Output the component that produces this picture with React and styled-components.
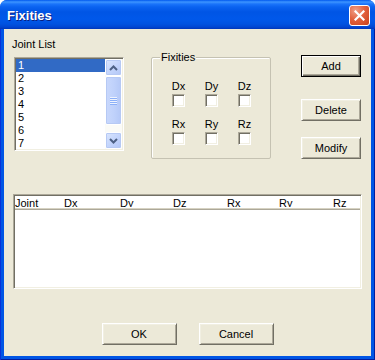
import React from "react";
import styled, { createGlobalStyle } from "styled-components";

const GlobalStyle = createGlobalStyle`
  html, body { margin: 0; padding: 0; background: #ffffff; }
  body { font-family: "Liberation Sans", Arial, sans-serif; font-size: 11px; color: #000; }
  * { box-sizing: border-box; }
`;

const Window = styled.div`
  width: 375px;
  height: 360px;
  display: flex;
  flex-direction: column;
  border-radius: 7px 7px 0 0;
  overflow: hidden;
  background: #0054e3;
`;

const TitleBar = styled.div`
  height: 29px;
  flex: none;
  display: flex;
  align-items: center;
  justify-content: space-between;
  padding: 0 5px 0 7px;
  background: linear-gradient(
    180deg,
    #0058ee 0px,
    #3d95ff 2px,
    #1a74fa 4px,
    #0a62f0 7px,
    #0055e5 12px,
    #0058ea 19px,
    #0052e0 24px,
    #0046d2 27px,
    #0035b8 29px
  );
`;

const Title = styled.span`
  font-family: "Liberation Sans", Arial, sans-serif;
  font-weight: bold;
  font-size: 13px;
  color: #ffffff;
  text-shadow: 1px 1px 0 #0a1e80;
  margin-top: 1px;
`;

const CloseButton = styled.div`
  width: 21px;
  height: 21px;
  margin-top: 1px;
  border: 1px solid #ffffff;
  border-radius: 3px;
  background: radial-gradient(circle at 30% 25%, #f0a088 0%, #e2623f 45%, #c8401a 100%);
  display: flex;
  align-items: center;
  justify-content: center;
`;

const Frame = styled.div`
  flex: 1;
  display: flex;
  padding: 0 4px 4px 4px;
  background: #0055e5;
  box-shadow: inset 1px 0 0 #0831d9, inset -1px 0 0 #001ea0, inset 0 -1px 0 #001ea0;
`;

const Client = styled.div`
  flex: 1;
  background: #ece9d8;
  display: flex;
  flex-direction: column;
`;

const TopRow = styled.div`
  height: 130px;
  flex: none;
  display: flex;
  align-items: flex-start;
  padding-left: 8px;
`;

const JointColumn = styled.div`
  display: flex;
  flex-direction: column;
  margin-top: 9px;
`;

const Label = styled.div`
  line-height: 13px;
  height: 13px;
  font-size: 11px;
`;

const sunken = `
  border-top: 1px solid #aca899;
  border-left: 1px solid #aca899;
  border-right: 1px solid #ffffff;
  border-bottom: 1px solid #ffffff;
  box-shadow: inset 1px 1px 0 #716f64, inset -1px -1px 0 #f1efe2;
`;

const ListBox = styled.div`
  ${sunken}
  margin: 6px 0 0 2px;
  width: 110px;
  height: 94px;
  padding: 1px;
  background: #ffffff;
  display: flex;
`;

const Items = styled.div`
  flex: 1;
  overflow: hidden;
`;

const Item = styled.div`
  height: 13px;
  line-height: 13px;
  padding-left: 2px;
  background: ${(p) => (p.$selected ? "#316ac5" : "transparent")};
  color: ${(p) => (p.$selected ? "#ffffff" : "#000000")};
`;

const ScrollBar = styled.div`
  width: 17px;
  flex: none;
  display: flex;
  flex-direction: column;
  background: #fbfbf7;
`;

const ScrollButton = styled.div`
  width: 17px;
  height: 17px;
  flex: none;
  border: 1px solid #ffffff;
  border-radius: 2px;
  box-shadow: inset 0 0 0 1px #b6c9f4;
  background: linear-gradient(135deg, #dae6fd 0%, #c4d5fc 50%, #b2c6f6 100%);
  display: flex;
  align-items: center;
  justify-content: center;
`;

const Thumb = styled.div`
  height: 49px;
  margin-bottom: 7px;
  border: 1px solid #ffffff;
  border-radius: 2px;
  box-shadow: inset 0 0 0 1px #b6c9f4;
  background: linear-gradient(90deg, #c9d8fc 0%, #c0d2fb 50%, #b4c8f7 100%);
  display: flex;
  flex-direction: column;
  align-items: center;
  justify-content: center;
  gap: 1px;
`;

const Grip = styled.div`
  width: 7px;
  height: 1px;
  background: #eef3fe;
  box-shadow: 0 1px 0 #8cb0f8;
`;

const Track = styled.div`
  flex: 1;
`;

const GroupBox = styled.div`
  position: relative;
  margin: 28px 0 0 27px;
  width: 120px;
  height: 102px;
  border: 1px solid #c5c2b2;
  border-radius: 2px;
  box-shadow: inset 1px 1px 0 #ffffff;
  padding: 22px 0 0 10px;
`;

const Legend = styled.span`
  position: absolute;
  top: -7px;
  left: 8px;
  padding: 0 1px;
  line-height: 13px;
  background: #ece9d8;
`;

const CheckGrid = styled.div`
  display: grid;
  grid-template-columns: repeat(3, 33px);
  row-gap: 11px;
`;

const CheckCell = styled.div`
  display: flex;
  flex-direction: column;
  align-items: center;
  gap: 1px;
`;

const CheckBox = styled.div`
  ${sunken}
  width: 13px;
  height: 13px;
  background: #ffffff;
`;

const ButtonColumn = styled.div`
  display: flex;
  flex-direction: column;
  margin: 26px 0 0 30px;
`;

const Button = styled.div`
  width: ${(p) => p.$w || 60}px;
  height: 22px;
  margin-top: ${(p) => p.$mt || 0}px;
  display: flex;
  align-items: center;
  justify-content: center;
  background: #ece9d8;
  line-height: 13px;
  border-top: 1px solid ${(p) => (p.$default ? "#000" : "#ffffff")};
  border-left: 1px solid ${(p) => (p.$default ? "#000" : "#ffffff")};
  border-right: 1px solid ${(p) => (p.$default ? "#000" : "#716f64")};
  border-bottom: 1px solid ${(p) => (p.$default ? "#000" : "#716f64")};
  box-shadow: ${(p) =>
    p.$default
      ? "inset 1px 1px 0 #ffffff, inset -1px -1px 0 #716f64, inset -2px -2px 0 #aca899"
      : "inset 1px 1px 0 #f1efe2, inset -1px -1px 0 #aca899"};
`;

const Table = styled.div`
  ${sunken}
  margin: 35px 0 0 9px;
  width: 349px;
  height: 95px;
  padding: 1px;
  background: #ffffff;
`;

const HeaderRow = styled.div`
  display: grid;
  grid-template-columns: 49px 56px 53px 54px 52px 54px 1fr;
  padding-bottom: 1px;
  border-bottom: 1px solid #d6d2c2;
  box-shadow: 0 1px 0 #aca899;
`;

const HeaderCell = styled.div`
  height: 11px;
  line-height: 14px;
  overflow: hidden;
  white-space: nowrap;
`;

const BottomRow = styled.div`
  display: flex;
  justify-content: center;
  gap: 22px;
  margin-top: 34px;
`;

const Arrow = ({ up }) => (
  <svg width="9" height="6" viewBox="0 0 9 6">
    <polyline
      points={up ? "1,5 4.5,1.5 8,5" : "1,1 4.5,4.5 8,1"}
      fill="none"
      stroke="#4d6185"
      strokeWidth="2"
    />
  </svg>
);

const labels = ["Dx", "Dy", "Dz", "Rx", "Ry", "Rz"];
const columns = ["Joint", "Dx", "Dy", "Dz", "Rx", "Ry", "Rz"];

export default function App() {
  return (
    <>
      <GlobalStyle />
      <Window>
        <TitleBar>
          <Title>Fixities</Title>
          <CloseButton>
            <svg width="11" height="11" viewBox="0 0 11 11">
              <path d="M1.5 1.5 L9.5 9.5 M9.5 1.5 L1.5 9.5" stroke="#fff" strokeWidth="2.2" strokeLinecap="square" />
            </svg>
          </CloseButton>
        </TitleBar>
        <Frame>
          <Client>
            <TopRow>
              <JointColumn>
                <Label>Joint List</Label>
                <ListBox>
                  <Items>
                    {["1", "2", "3", "4", "5", "6", "7"].map((n, i) => (
                      <Item key={n} $selected={i === 0}>
                        {n}
                      </Item>
                    ))}
                  </Items>
                  <ScrollBar>
                    <ScrollButton>
                      <Arrow up />
                    </ScrollButton>
                    <Thumb>
                      <Grip />
                      <Grip />
                      <Grip />
                      <Grip />
                    </Thumb>
                    <Track />
                    <ScrollButton>
                      <Arrow />
                    </ScrollButton>
                  </ScrollBar>
                </ListBox>
              </JointColumn>
              <GroupBox>
                <Legend>Fixities</Legend>
                <CheckGrid>
                  {labels.map((l) => (
                    <CheckCell key={l}>
                      <Label>{l}</Label>
                      <CheckBox />
                    </CheckCell>
                  ))}
                </CheckGrid>
              </GroupBox>
              <ButtonColumn>
                <Button $default>Add</Button>
                <Button $mt={22}>Delete</Button>
                <Button $mt={16}>Modify</Button>
              </ButtonColumn>
            </TopRow>
            <Table>
              <HeaderRow>
                {columns.map((c) => (
                  <HeaderCell key={c}>{c}</HeaderCell>
                ))}
              </HeaderRow>
            </Table>
            <BottomRow>
              <Button $w={75}>OK</Button>
              <Button $w={75}>Cancel</Button>
            </BottomRow>
          </Client>
        </Frame>
      </Window>
    </>
  );
}
